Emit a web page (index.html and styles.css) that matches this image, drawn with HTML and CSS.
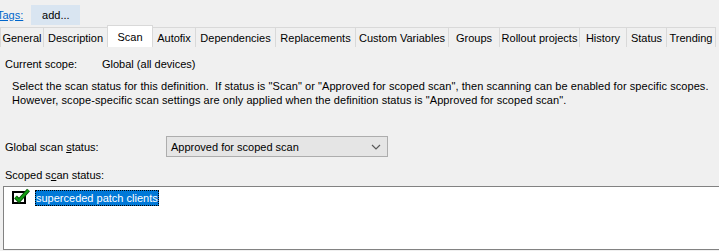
FILE: index.html
```html
<!DOCTYPE html>
<html>
<head>
<meta charset="utf-8">
<link rel="stylesheet" href="styles.css">
</head>
<body>
<div class="tags">
  <a class="tag-link" href="#">Tags:</a>
  <div class="add-btn">add...</div>
</div>
<div class="tabstrip">
  <div class="tab first">General</div>
  <div class="tab">Description</div>
  <div class="tab selected">Scan</div>
  <div class="tab">Autofix</div>
  <div class="tab">Dependencies</div>
  <div class="tab">Replacements</div>
  <div class="tab">Custom Variables</div>
  <div class="tab">Groups</div>
  <div class="tab">Rollout projects</div>
  <div class="tab">History</div>
  <div class="tab">Status</div>
  <div class="tab">Trending</div>
</div>
<div class="panel">
  <div class="scope-row">
    <span class="scope-label">Current scope:</span>
    <span class="scope-value">Global (all devices)</span>
  </div>
  <div class="desc">
    <div>Select the scan status for this definition.&nbsp; If status is "Scan" or "Approved for scoped scan", then scanning can be enabled for specific scopes.</div>
    <div>However, scope-specific scan settings are only applied when the definition status is "Approved for scoped scan".</div>
  </div>
  <div class="global-row">
    <span class="global-label">Global scan <u>s</u>tatus:</span>
    <div class="select">
      <span>Approved for scoped scan</span>
      <svg class="chev" width="10" height="6" viewBox="0 0 10 6"><path d="M1 1 L5 5 L9 1" fill="none" stroke="#5a5a5a" stroke-width="1.2"/></svg>
    </div>
  </div>
  <div class="scoped-label">Scoped s<u>c</u>an status:</div>
  <div class="listbox">
    <div class="item">
      <svg class="check" width="20" height="18" viewBox="0 0 20 18">
        <rect x="2" y="4" width="12" height="11" fill="#fff" stroke="#000" stroke-width="2"/>
        <path d="M4.5 9 L8 12.5 L17.5 2" fill="none" stroke="#0b4f0b" stroke-width="4" stroke-linejoin="miter"/>
        <path d="M4.5 9 L8 12.5 L17.5 2" fill="none" stroke="#13a013" stroke-width="2"/>
      </svg>
      <span class="item-text">superceded patch clients</span>
    </div>
  </div>
</div>
</body>
</html>
```
FILE: styles.css
```css
html, body {
  margin: 0;
  padding: 0;
  background: #f0f0f0;
  overflow: hidden;
}
body {
  width: 719px;
  height: 251px;
  font-family: "Liberation Sans", Arial, sans-serif;
  font-size: 11px;
  color: #000;
}
.tags {
  display: flex;
  align-items: center;
  padding-top: 4px;
  height: 21px;
  gap: 8px;
}
.tag-link {
  color: #0066cc;
  text-decoration: underline;
  margin-left: -3px;
}
.add-btn {
  width: 49px;
  height: 20px;
  background: #d9e5f1;
  display: flex;
  align-items: center;
  justify-content: center;
}
.tabstrip {
  display: grid;
  grid-template-columns: 44px 64px 45px 43px 80px 80px 93px 51px 80px 47px 40px 49px;
  height: 22px;
  align-items: end;
}
.tab {
  height: 19px;
  border-top: 1px solid #d9d9d9;
  border-right: 1px solid #d9d9d9;
  background: #f0f0f0;
  display: flex;
  align-items: center;
  justify-content: center;
  white-space: nowrap;
  box-sizing: content-box;
}
.tab.first {
  border-left: 1px solid #d9d9d9;
}
.tab.selected {
  height: 21px;
  background: #fff;
  border-left: 1px solid #d9d9d9;
  margin-left: -1px;
}
.panel {
  padding-top: 10px;
}
.scope-row {
  display: flex;
  line-height: 14px;
  padding-left: 5px;
}
.scope-label {
  width: 97px;
}
.desc {
  margin-top: 8px;
  padding-left: 12px;
  line-height: 14px;
  white-space: nowrap;
  letter-spacing: 0.07px;
}
.global-row {
  margin-top: 29px;
  display: flex;
  align-items: center;
  padding-left: 5px;
}
.global-label {
  width: 161px;
}
.select {
  border: 1px solid #adadad;
  background: #e5e5e5;
  display: flex;
  align-items: center;
  justify-content: space-between;
  padding: 0 6px 0 4px;
  box-sizing: border-box;
  width: 222px;
  height: 21px;
}
.chev {
  display: block;
}
.scoped-label {
  margin-top: 11px;
  padding-left: 5px;
  line-height: 14px;
}
.listbox {
  margin-top: 4px;
  margin-left: 3px;
  width: 730px;
  height: 62px;
  background: #fff;
  border: 1px solid #828282;
}
.item {
  display: flex;
  align-items: center;
  padding-top: 3px;
  padding-left: 7px;
  gap: 4px;
}
.check {
  display: block;
  margin-top: -2px;
}
.item-text {
  background: #0078d7;
  color: #fff;
  outline: 1px dotted #000;
  outline-offset: -1px;
  height: 16px;
  line-height: 16px;
  padding: 0 1px;
}
```
